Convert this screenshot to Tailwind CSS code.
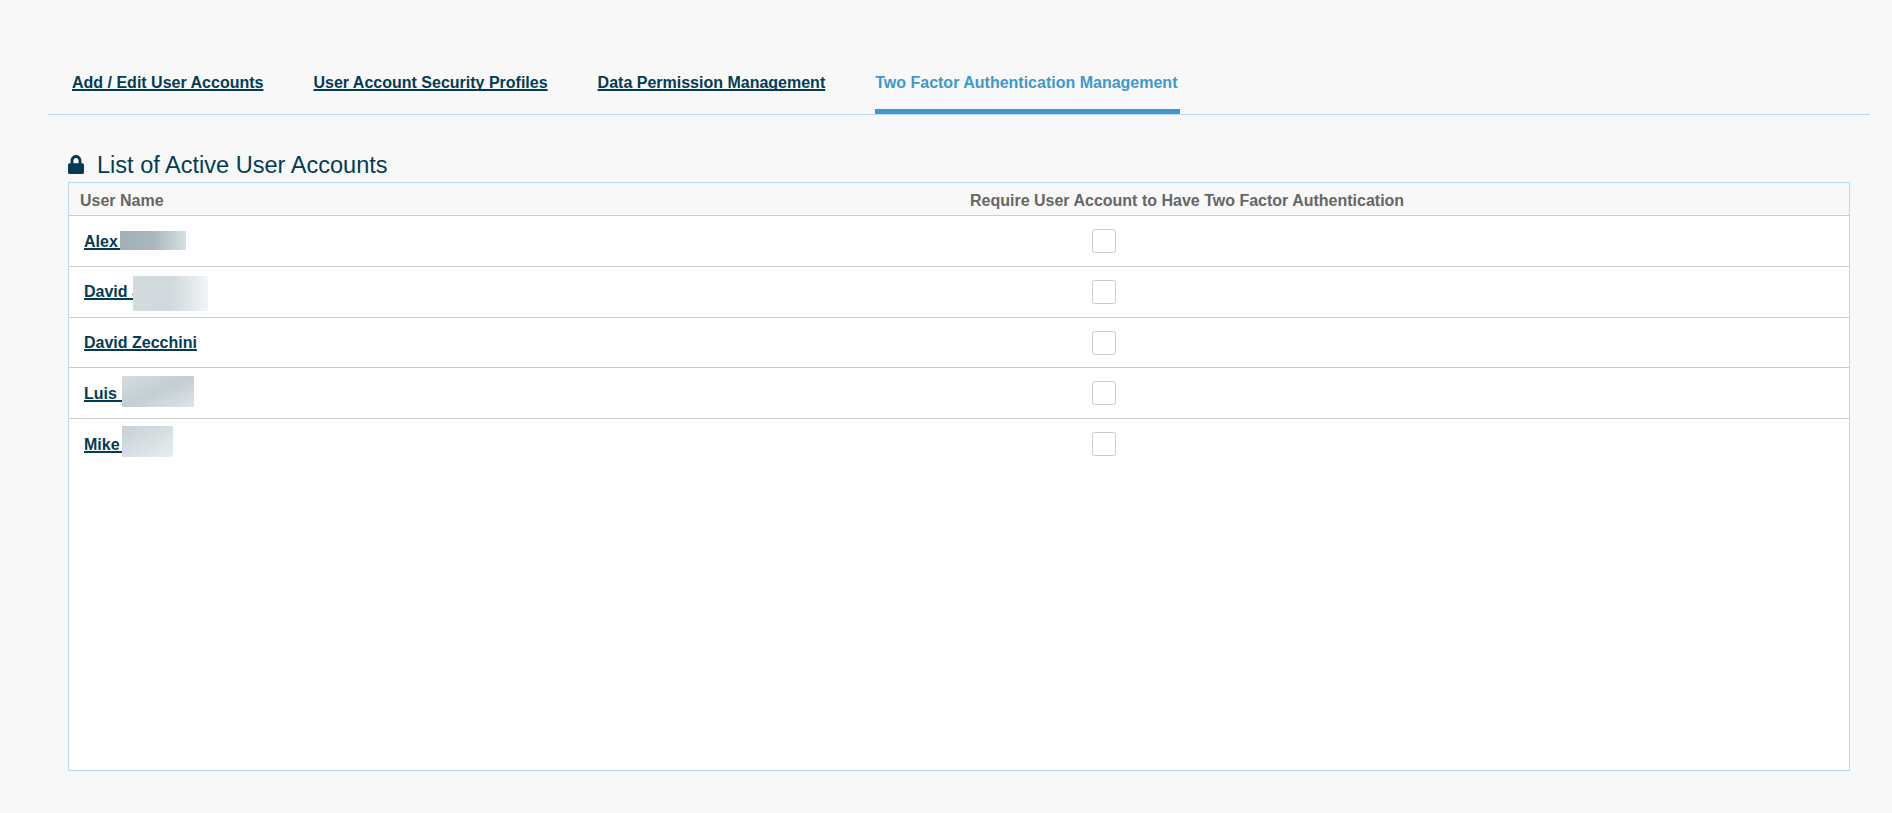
<!DOCTYPE html>
<html lang="en">
<head>
<meta charset="utf-8">
<title>Two Factor Authentication Management</title>
<script src="https://cdn.jsdelivr.net/npm/@tailwindcss/browser@4"></script>
</head>
<body class="bg-[#f8f8f8] font-['Liberation_Sans',Arial,sans-serif] h-[813px] overflow-hidden">
  <nav class="ml-[48px] mr-[22px] mt-[60px] h-[55px] border-b border-[#bcd8ec] flex pl-[24px] gap-[50px] text-base font-bold text-[#033c52]">
    <a href="#" class="block h-[54px] pt-[11px] underline decoration-2 underline-offset-[1px] [text-decoration-skip-ink:none]">Add / Edit User Accounts</a>
    <a href="#" class="block h-[54px] pt-[11px] underline decoration-2 underline-offset-[1px] [text-decoration-skip-ink:none]">User Account Security Profiles</a>
    <a href="#" class="block h-[54px] pt-[11px] underline decoration-2 underline-offset-[1px] [text-decoration-skip-ink:none]">Data Permission Management</a>
    <a href="#" class="block h-[54px] w-[305px] pt-[11px] text-[#3d98cc] border-b-[5px] border-[#3d98cc]">Two Factor Authentication Management</a>
  </nav>

  <section class="ml-[68px] mr-[42px]">
    <h2 class="h-[67px] pt-[33px] flex items-center gap-[13px] text-[23.55px] leading-[32px] text-[#033c52] font-normal">
      <svg class="w-[16px] h-[19px] -mt-[2px] shrink-0 fill-current" viewBox="0 0 448 512" preserveAspectRatio="none" aria-hidden="true"><path d="M400 224h-24v-72C376 68.2 307.8 0 224 0S72 68.2 72 152v72H48c-26.5 0-48 21.5-48 48v192c0 26.5 21.5 48 48 48h352c26.5 0 48-21.5 48-48V272c0-26.5-21.5-48-48-48zm-104 0H152v-72c0-39.7 32.3-72 72-72s72 32.3 72 72v72z"/></svg>
      <span>List of Active User Accounts</span>
    </h2>

    <div class="h-[589px] border border-[#bcd8ec] bg-white">
      <div class="h-[33px] flex items-center bg-[#f8f8f8] border-b border-[#cccccc] pl-[11px] pt-[4px] text-base font-bold text-[#666666]">
        <span class="w-[890px]">User Name</span>
        <span>Require User Account to Have Two Factor Authentication</span>
      </div>

      <div class="relative h-[51px] flex items-center border-b border-[#cccccc] pl-[15px]">
        <div class="w-[1008px] pt-px text-base font-bold text-[#033c52]">
          <a href="#" class="underline decoration-2 underline-offset-[1px] [text-decoration-skip-ink:none]">Alex&nbsp;&nbsp;</a>
        </div>
        <span class="absolute left-[51px] top-[15px] w-[66px] h-[19px] bg-linear-to-r from-[#a0b0b6] via-[#a8b7bd] to-[#d8e0e3]"></span>
        <span class="w-[24px] h-[24px] rounded-[3px] border border-[#cccccc] bg-white"></span>
      </div>
      <div class="relative h-[51px] flex items-center border-b border-[#cccccc] pl-[15px]">
        <div class="w-[1008px] text-base font-bold text-[#033c52]">
          <a href="#" class="underline decoration-2 underline-offset-[1px] [text-decoration-skip-ink:none]">David J</a>
        </div>
        <span class="absolute left-[64px] top-[9px] w-[75px] h-[35px] bg-linear-to-r from-[#d3dbde] via-[#d0d9dc] to-[#f2f4f6]"></span>
        <span class="w-[24px] h-[24px] rounded-[3px] border border-[#cccccc] bg-white"></span>
      </div>
      <div class="h-[50px] flex items-center border-b border-[#cccccc] pl-[15px]">
        <div class="w-[1008px] text-base font-bold text-[#033c52]">
          <a href="#" class="underline decoration-2 underline-offset-[1px] [text-decoration-skip-ink:none]">David Zecchini</a>
        </div>
        <span class="w-[24px] h-[24px] rounded-[3px] border border-[#cccccc] bg-white"></span>
      </div>
      <div class="relative h-[51px] flex items-center border-b border-[#cccccc] pl-[15px]">
        <div class="w-[1008px] pt-px text-base font-bold text-[#033c52]">
          <a href="#" class="underline decoration-2 underline-offset-[1px] [text-decoration-skip-ink:none]">Luis&nbsp;&nbsp;</a>
        </div>
        <span class="absolute left-[53px] top-[8px] w-[72px] h-[31px] bg-linear-to-br from-[#d6dde0] via-[#c3ced2] to-[#dfe5e8]"></span>
        <span class="w-[24px] h-[24px] rounded-[3px] border border-[#cccccc] bg-white"></span>
      </div>
      <div class="relative h-[50px] flex items-center pl-[15px]">
        <div class="w-[1008px] pt-px text-base font-bold text-[#033c52]">
          <a href="#" class="underline decoration-2 underline-offset-[1px] [text-decoration-skip-ink:none]">Mike&nbsp;</a>
        </div>
        <span class="absolute left-[53px] top-[7px] w-[51px] h-[31px] bg-linear-to-br from-[#c6d0d4] to-[#e8edef]"></span>
        <span class="w-[24px] h-[24px] rounded-[3px] border border-[#cccccc] bg-white"></span>
      </div>
    </div>
  </section>
</body>
</html>
